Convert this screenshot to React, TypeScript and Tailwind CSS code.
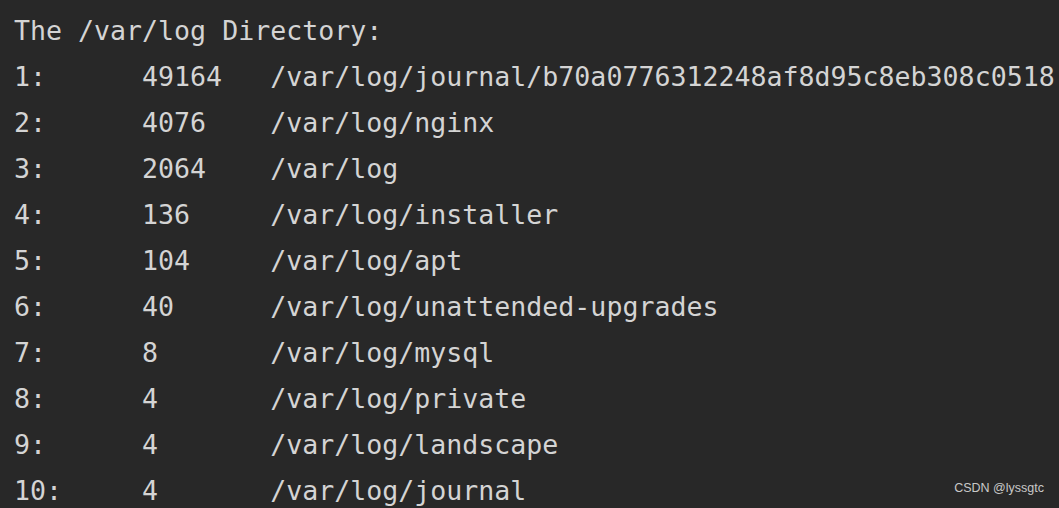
const rows: [string, string, string][] = [
  ["1:", "49164", "/var/log/journal/b70a0776312248af8d95c8eb308c0518"],
  ["2:", "4076", "/var/log/nginx"],
  ["3:", "2064", "/var/log"],
  ["4:", "136", "/var/log/installer"],
  ["5:", "104", "/var/log/apt"],
  ["6:", "40", "/var/log/unattended-upgrades"],
  ["7:", "8", "/var/log/mysql"],
  ["8:", "4", "/var/log/private"],
  ["9:", "4", "/var/log/landscape"],
  ["10:", "4", "/var/log/journal"],
];

const App = () => {
  return (
    <div className="relative w-full h-[508px] overflow-hidden bg-[#282828] text-[#d4d4d4]">
      <div
        className="pl-[14px] pt-[8px] text-[26.6px] leading-[46px] whitespace-pre"
        style={{ fontFamily: '"DejaVu Sans Mono", "Liberation Mono", monospace' }}
      >
        <div>The /var/log Directory:</div>
        {rows.map(([num, size, path]) => (
          <div key={num} className="grid grid-cols-[8ch_8ch_1fr]">
            <span>{num}</span>
            <span>{size}</span>
            <span>{path}</span>
          </div>
        ))}
      </div>
      <span
        className="absolute right-[15px] bottom-[10px] text-[12.5px] text-[#c8c8c8]"
        style={{ fontFamily: '"Liberation Sans", Arial, sans-serif' }}
      >
        CSDN @lyssgtc
      </span>
    </div>
  );
};

export default App;
